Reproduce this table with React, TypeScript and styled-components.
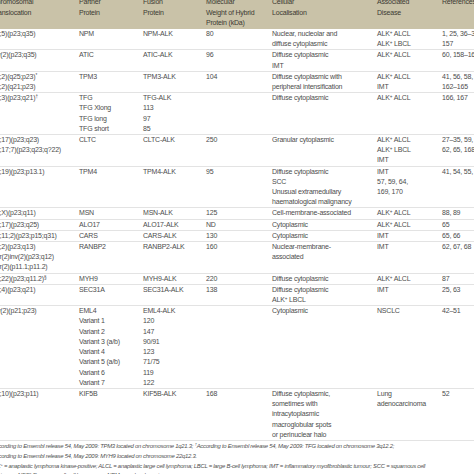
import React from 'react';
import styled, { createGlobalStyle } from 'styled-components';

// ---------------------------------------------------------------------------
// Data
// ---------------------------------------------------------------------------

type Line = React.ReactNode;
type RowDef = { id: string; cells: Line[][] };

const Sup = styled.sup`
  font-size: 0.65em;
  line-height: 0;
  vertical-align: 0.45em;
  margin-left: 0.2px;
`;

const alk = (rest: string) => (
  <>
    ALK<Sup>+</Sup> {rest}
  </>
);

const mark = (text: string, m: string) => (
  <>
    {text}
    <Sup>{m}</Sup>
  </>
);

const HEADERS: string[][] = [
  ['Chromosomal', 'Translocation'],
  ['Partner', 'Protein'],
  ['Fusion', 'Protein'],
  ['Molecular', 'Weight of Hybrid', 'Protein (kDa)'],
  ['Cellular', 'Localisation'],
  ['Associated', 'Disease'],
  ['References'],
];

const ROWS: RowDef[] = [
  {
    id: 'npm',
    cells: [
      ['t(2;5)(p23;q35)'],
      ['NPM'],
      ['NPM-ALK'],
      ['80'],
      ['Nuclear, nucleolar and', 'diffuse cytoplasmic'],
      [alk('ALCL'), alk('LBCL')],
      ['1, 25, 36–38', '157'],
    ],
  },
  {
    id: 'atic',
    cells: [
      ['inv(2)(p23;q35)'],
      ['ATIC'],
      ['ATIC-ALK'],
      ['96'],
      ['Diffuse cytoplasmic', 'IMT'],
      [alk('ALCL')],
      ['60, 158–161'],
    ],
  },
  {
    id: 'tpm3',
    cells: [
      [mark('t(1;2)(q25;p23)', '*'), 't(1;2)(q21;p23)'],
      ['TPM3'],
      ['TPM3-ALK'],
      ['104'],
      ['Diffuse cytoplasmic with', 'peripheral intensification'],
      [alk('ALCL'), 'IMT'],
      ['41, 56, 58,', '162–165'],
    ],
  },
  {
    id: 'tfg',
    cells: [
      [mark('t(2;3)(p23;q21)', '†')],
      ['TFG', 'TFG Xlong', 'TFG long', 'TFG short'],
      ['TFG-ALK', '113', '97', '85'],
      [],
      ['Diffuse cytoplasmic'],
      [alk('ALCL')],
      ['166, 167'],
    ],
  },
  {
    id: 'cltc',
    cells: [
      ['t(2;17)(p23;q23)', 't(2;17;7)(p23;q23;q?22)'],
      ['CLTC'],
      ['CLTC-ALK'],
      ['250'],
      ['Granular cytoplasmic'],
      [alk('ALCL'), alk('LBCL'), 'IMT'],
      ['27–35, 59,', '62, 65, 168'],
    ],
  },
  {
    id: 'tpm4',
    cells: [
      ['t(2;19)(p23;p13.1)'],
      ['TPM4'],
      ['TPM4-ALK'],
      ['95'],
      ['Diffuse cytoplasmic', 'SCC', 'Unusual extramedullary', 'haematological malignancy'],
      ['IMT', '57, 59, 64,', '169, 170'],
      ['41, 54, 55,'],
    ],
  },
  {
    id: 'msn',
    cells: [
      ['t(2;X)(p23;q11)'],
      ['MSN'],
      ['MSN-ALK'],
      ['125'],
      ['Cell-membrane-associated'],
      [alk('ALCL')],
      ['88, 89'],
    ],
  },
  {
    id: 'alo17',
    cells: [
      ['t(2;17)(p23;q25)'],
      ['ALO17'],
      ['ALO17-ALK'],
      ['ND'],
      ['Cytoplasmic'],
      [alk('ALCL')],
      ['65'],
    ],
  },
  {
    id: 'cars',
    cells: [
      ['t(2;11;2)(p23;p15;q31)'],
      ['CARS'],
      ['CARS-ALK'],
      ['130'],
      ['Cytoplasmic'],
      ['IMT'],
      ['65, 66'],
    ],
  },
  {
    id: 'ranbp2',
    cells: [
      ['t(2;2)(p23;q13)', 'der(2)inv(2)(p23;q12)', 'der(2)(p11.1;p11.2)'],
      ['RANBP2'],
      ['RANBP2-ALK'],
      ['160'],
      ['Nuclear-membrane-', 'associated'],
      ['IMT'],
      ['62, 67, 68'],
    ],
  },
  {
    id: 'myh9',
    cells: [
      [mark('t(2;22)(p23;q11.2)', '§')],
      ['MYH9'],
      ['MYH9-ALK'],
      ['220'],
      ['Diffuse cytoplasmic'],
      [alk('ALCL')],
      ['87'],
    ],
  },
  {
    id: 'sec31a',
    cells: [
      ['t(2;4)(p23;q21)'],
      ['SEC31A'],
      ['SEC31A-ALK'],
      ['138'],
      ['Diffuse cytoplasmic', alk('LBCL')],
      ['IMT'],
      ['25, 63'],
    ],
  },
  {
    id: 'eml4',
    cells: [
      ['inv(2)(p21;p23)'],
      [
        'EML4',
        'Variant 1',
        'Variant 2',
        'Variant 3 (a/b)',
        'Variant 4',
        'Variant 5 (a/b)',
        'Variant 6',
        'Variant 7',
      ],
      ['EML4-ALK', '120', '147', '90/91', '123', '71/75', '119', '122'],
      [],
      ['Cytoplasmic'],
      ['NSCLC'],
      ['42–51'],
    ],
  },
  {
    id: 'kif5b',
    cells: [
      ['t(2;10)(p23;p11)'],
      ['KIF5B'],
      ['KIF5B-ALK'],
      ['168'],
      [
        'Diffuse cytoplasmic,',
        'sometimes with',
        'intracytoplasmic',
        'macroglobular spots',
        'or perinuclear halo',
      ],
      ['Lung', 'adenocarcinoma'],
      ['52'],
    ],
  },
];

// ---------------------------------------------------------------------------
// Styled components
// ---------------------------------------------------------------------------

const GlobalStyle = createGlobalStyle`
  html, body {
    margin: 0;
    padding: 0;
    background: #fff;
  }
`;

const Page = styled.div`
  width: 474px;
  height: 474px;
  overflow: hidden;
  background: #fff;
  font-family: 'Liberation Sans', Arial, sans-serif;
`;

const Table = styled.div`
  width: 530px;
  margin: -3px 0 0 -8px;
  display: flex;
  flex-direction: column;
`;

const COLUMNS = '87px 64px 63px 66px 105px 65px 1fr';

const HeaderRow = styled.div`
  display: grid;
  grid-template-columns: ${COLUMNS};
  background: #c9c2a8;
  padding-bottom: 0.5px;
`;

const HeaderCell = styled.div`
  font-size: 7px;
  letter-spacing: -0.2px;
  line-height: 10.5px;
  color: #3c3a33;
  white-space: nowrap;
`;

const Row = styled.div`
  display: grid;
  grid-template-columns: ${COLUMNS};
  border-bottom: 1px solid #e3e3e3;
`;

const Cell = styled.div`
  display: flex;
  flex-direction: column;
  font-size: 7px;
  letter-spacing: -0.2px;
  line-height: 10.2px;
  color: #4d4d4d;
  white-space: nowrap;
`;

const Notes = styled.div`
  margin-left: -10px;
  padding-top: 1px;
  display: flex;
  flex-direction: column;
  gap: 1px;
`;

const NoteLine = styled.div`
  font-size: 5.9px;
  font-style: italic;
  letter-spacing: -0.25px;
  line-height: 8.8px;
  color: #505050;
  white-space: nowrap;
`;

// ---------------------------------------------------------------------------
// Component
// ---------------------------------------------------------------------------

export default function App() {
  return (
    <Page>
      <GlobalStyle />
      <Table>
        <HeaderRow>
          {HEADERS.map((lines, i) => (
            <HeaderCell key={i}>
              {lines.map((l) => (
                <div key={l}>{l}</div>
              ))}
            </HeaderCell>
          ))}
        </HeaderRow>
        {ROWS.map((row) => (
          <Row key={row.id}>
            {row.cells.map((lines, i) => (
              <Cell key={i}>
                {lines.map((l, j) => (
                  <div key={j}>{l}</div>
                ))}
              </Cell>
            ))}
          </Row>
        ))}
      </Table>
      <Notes>
        <NoteLine>
          *According to Ensembl release 54, May 2009: TPM3 located on chromosome 1q21.3;{' '}
          <Sup>†</Sup>According to Ensembl release 54, May 2009: TFG located on chromosome 3q12.2;
        </NoteLine>
        <NoteLine>
          <Sup>§</Sup>According to Ensembl release 54, May 2009: MYH9 located on chromosome 22q12.3.
        </NoteLine>
        <NoteLine>
          ALK<Sup>+</Sup> = anaplastic lymphoma kinase-positive; ALCL = anaplastic large cell
          lymphoma; LBCL = large B-cell lymphoma; IMT = inflammatory myofibroblastic tumour; SCC =
          squamous cell
        </NoteLine>
        <NoteLine>carcinoma; NSCLC = non-small-cell lung cancer; NPM = nucleophosmin.</NoteLine>
      </Notes>
    </Page>
  );
}
